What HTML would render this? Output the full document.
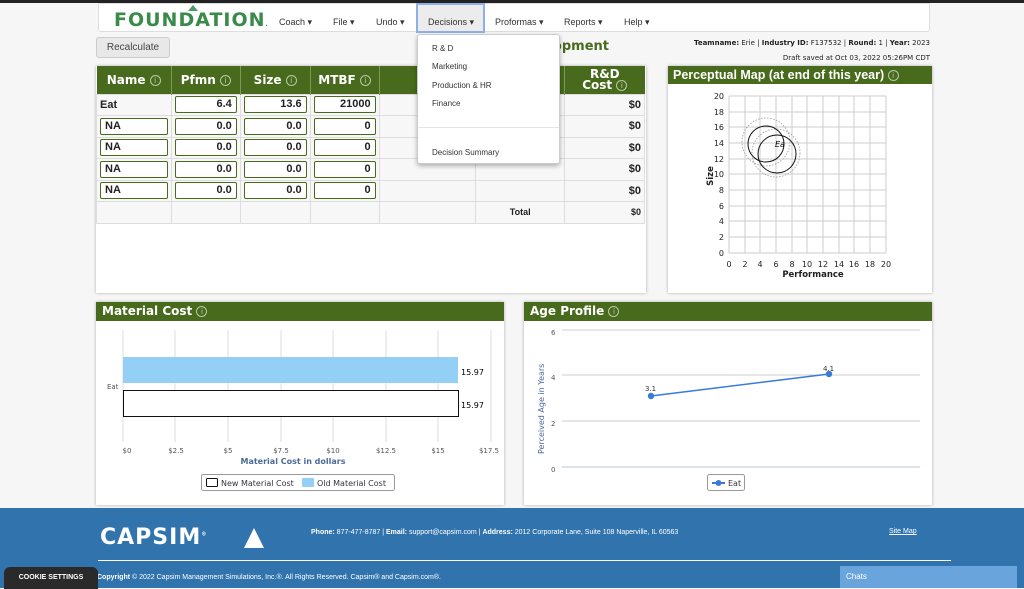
<!DOCTYPE html>
<html><head><meta charset="utf-8"><style>
*{box-sizing:border-box;margin:0;padding:0}
body{width:1024px;height:588px;overflow:hidden;background:#f6f6f6;font-family:"Liberation Sans",sans-serif;position:relative;color:#222}
.abs{position:absolute}
.panel{position:absolute;background:#fff;box-shadow:0 0 3px rgba(0,0,0,.3)}
.hdr{background:#486a1c;color:#fff;font-weight:bold;font-family:"DejaVu Sans","Liberation Sans",sans-serif}
.nav span{position:absolute;top:13px;font-size:9px;color:#333}
.i{display:inline-block;width:11px;height:11px;border:1px solid #b8c8a8;border-radius:50%;font-size:8px;line-height:9px;text-align:center;color:#b8c8a8;font-weight:normal;vertical-align:middle}
table{border-collapse:collapse}
td{border:1px solid #ddd;height:21.5px;font-size:11px;font-weight:bold;text-align:right;padding:0 3px;background:#f7f7f7}
th{border-left:1px solid #7d9a5a;color:#fff;font-size:12px;height:28px;font-family:"DejaVu Sans",sans-serif}
.in{border:1px solid #486a1c;border-radius:2px;background:#fff;height:17px;line-height:15px;padding:0 4px;font-size:11px}
.dd div{position:absolute;left:14px;font-size:8px;color:#333}
</style></head><body>
<div class="abs" style="left:0;top:0;width:1024px;height:3px;background:#222"></div>
<!-- nav -->
<div class="abs nav" style="left:98px;top:3px;width:832px;height:29px;background:#fff;border:1px solid #ddd;border-radius:0 0 3px 3px">
 <div class="abs" style="left:15px;top:5px;font-family:'DejaVu Sans',sans-serif;font-weight:bold;font-size:19px;color:#3a8a4a;letter-spacing:1px">FOUNDATION<span style="position:static;font-size:6px;color:#3a8a4a">.</span></div>
 <div class="abs" style="left:89px;top:1px;width:0;height:0;border-left:5px solid transparent;border-right:5px solid transparent;border-bottom:6px solid #4a9a6a"></div>
 <span style="left:180px">Coach ▾</span><span style="left:234px">File ▾</span><span style="left:277px">Undo ▾</span>
 <div class="abs" style="left:317px;top:-1px;width:69px;height:30px;background:#ececec;border:2px solid #8fb0e6"></div>
 <span style="left:329px">Decisions ▾</span><span style="left:396px">Proformas ▾</span><span style="left:465px">Reports ▾</span><span style="left:525px">Help ▾</span>
</div>
<div class="abs" style="left:96px;top:37px;width:74px;height:21px;background:#e8e8e8;border:1px solid #ccc;border-radius:3px;font-size:10px;color:#444;text-align:center;line-height:19px">Recalculate</div>
<div class="abs" style="right:415px;top:39px;font-size:13px;font-weight:bold;color:#486a1c;font-family:'DejaVu Sans',sans-serif">Research &amp; Development</div>
<div class="abs" style="right:94px;top:39px;font-size:7px;color:#222;font-family:'DejaVu Sans',sans-serif"><b>Teamname:</b> Erie | <b>Industry ID:</b> F137532 | <b>Round:</b> 1 | <b>Year:</b> 2023</div>
<div class="abs" style="right:94px;top:54px;font-size:7px;color:#222;font-family:'DejaVu Sans',sans-serif">Draft saved at Oct 03, 2022 05:26PM CDT</div>
<!-- table panel -->
<div class="panel" style="left:96px;top:66px;width:550px;height:227px">
<table style="width:549px">
<tr class="hdr"><th style="width:75px;border-left:0">Name <span class="i">i</span></th><th style="width:69px">Pfmn <span class="i">i</span></th><th style="width:70px">Size <span class="i">i</span></th><th style="width:69px">MTBF <span class="i">i</span></th><th style="width:97px;line-height:11px">R<br>D</th><th style="width:89px"></th><th style="width:80px;line-height:11px">R&amp;D<br>Cost <span class="i">i</span></th></tr>
<tr><td style="text-align:left">Eat</td><td><div class="in">6.4</div></td><td><div class="in">13.6</div></td><td><div class="in">21000</div></td><td></td><td></td><td>$0</td></tr>
<tr><td style="text-align:left"><div class="in">NA</div></td><td><div class="in">0.0</div></td><td><div class="in">0.0</div></td><td><div class="in">0</div></td><td></td><td></td><td>$0</td></tr>
<tr><td style="text-align:left"><div class="in">NA</div></td><td><div class="in">0.0</div></td><td><div class="in">0.0</div></td><td><div class="in">0</div></td><td></td><td></td><td>$0</td></tr>
<tr><td style="text-align:left"><div class="in">NA</div></td><td><div class="in">0.0</div></td><td><div class="in">0.0</div></td><td><div class="in">0</div></td><td></td><td></td><td>$0</td></tr>
<tr><td style="text-align:left"><div class="in">NA</div></td><td><div class="in">0.0</div></td><td><div class="in">0.0</div></td><td><div class="in">0</div></td><td></td><td></td><td>$0</td></tr>
<tr><td></td><td></td><td></td><td></td><td></td><td style="text-align:center;font-size:9px">Total</td><td style="font-size:9px">$0</td></tr>
</table>
</div>
<!-- dropdown -->
<div class="abs dd" style="left:417px;top:34px;width:143px;height:130px;background:#fff;border:1px solid #ccc;border-radius:3px;box-shadow:0 2px 5px rgba(0,0,0,.3)">
 <div style="top:9px">R &amp; D</div><div style="top:27px">Marketing</div><div style="top:46px">Production &amp; HR</div><div style="top:64px">Finance</div>
 <div style="left:0;top:92px;width:141px;height:1px;background:#e5e5e5"></div>
 <div style="top:113px">Decision Summary</div>
</div>
<!-- perceptual map -->
<div class="panel" style="left:668px;top:66px;width:264px;height:227px">
 <div class="hdr" style="height:18px;font-size:11px;padding:2px 5px;white-space:nowrap;font-family:'Liberation Sans',sans-serif;font-size:12.5px">Perceptual Map (at end of this year) <span class="i">i</span></div>
 <svg class="abs" style="left:0;top:0" width="264" height="227">
  <g stroke="#ccc" stroke-width="1">
   <path d="M61 30V187M77 30V187M92 30V187M108 30V187M124 30V187M139 30V187M155 30V187M171 30V187M186 30V187M202 30V187M218 30V187"/>
   <path d="M61 30H218M61 46H218M61 61H218M61 77H218M61 93H218M61 108H218M61 124H218M61 140H218M61 155H218M61 171H218M61 187H218"/>
  </g>
  <g fill="none" stroke="#999" stroke-dasharray="1.5,1.5" stroke-width=".8">
   <circle cx="98" cy="76" r="24"/><circle cx="108" cy="87" r="24"/>
  </g>
  <g fill="none" stroke="#111" stroke-width="1">
   <circle cx="98" cy="78" r="18"/><circle cx="109" cy="88" r="19"/>
  </g>
  <text x="107" y="81" font-size="8" font-family="DejaVu Sans" font-style="italic">Ea</text>
  <g font-size="8" font-family="DejaVu Sans" fill="#222" text-anchor="end">
   <text x="56" y="33">20</text><text x="56" y="49">18</text><text x="56" y="64">16</text><text x="56" y="80">14</text><text x="56" y="96">12</text><text x="56" y="111">10</text><text x="56" y="127">8</text><text x="56" y="143">6</text><text x="56" y="158">4</text><text x="56" y="174">2</text><text x="56" y="190">0</text>
  </g>
  <g font-size="8" font-family="DejaVu Sans" fill="#222" text-anchor="middle">
   <text x="61" y="201">0</text><text x="77" y="201">2</text><text x="92" y="201">4</text><text x="108" y="201">6</text><text x="124" y="201">8</text><text x="139" y="201">10</text><text x="155" y="201">12</text><text x="171" y="201">14</text><text x="186" y="201">16</text><text x="202" y="201">18</text><text x="218" y="201">20</text>
   <text x="145" y="211" font-weight="bold" font-size="8.5">Performance</text>
   <text transform="translate(45,110) rotate(-90)" font-weight="bold" font-size="8.5">Size</text>
  </g>
 </svg>
</div>
<!-- material cost -->
<div class="panel" style="left:96px;top:302px;width:408px;height:203px">
 <div class="hdr" style="height:19px;font-size:12px;padding:2px 6px">Material Cost <span class="i">i</span></div>
 <svg class="abs" style="left:0;top:0" width="408" height="203">
  <path d="M27 28V140M79 28V140M132 28V140M185 28V140M237 28V140M290 28V140M342 28V140M395 28V140" stroke="#ddd"/>
  <rect x="27" y="55" width="335" height="26" fill="#94d0f5"/>
  <rect x="27.5" y="88.5" width="335" height="26" fill="#fff" stroke="#111"/>
  <text x="365" y="73" font-size="8" font-family="DejaVu Sans">15.97</text>
  <text x="365" y="106" font-size="8" font-family="DejaVu Sans">15.97</text>
  <text x="11" y="87" font-size="7" fill="#555" font-family="DejaVu Sans">Eat</text>
  <g font-size="7" fill="#555" font-family="DejaVu Sans" text-anchor="middle">
   <text x="31" y="151">$0</text><text x="80" y="151">$2.5</text><text x="132" y="151">$5</text><text x="185" y="151">$7.5</text><text x="237" y="151">$10</text><text x="290" y="151">$12.5</text><text x="342" y="151">$15</text><text x="393" y="151">$17.5</text>
   <text x="197" y="162" font-weight="bold" font-size="8" fill="#4a6a9a">Material Cost in dollars</text>
  </g>
  <rect x="105.5" y="172.5" width="193" height="16" rx="2" fill="#fff" stroke="#999"/>
  <rect x="110.5" y="176.5" width="11" height="8" rx="1" fill="#fff" stroke="#111"/>
  <rect x="206" y="176" width="12" height="9" rx="1" fill="#94d0f5"/>
  <text x="125" y="184" font-size="8" fill="#334" font-family="DejaVu Sans">New Material Cost</text>
  <text x="221" y="184" font-size="8" fill="#334" font-family="DejaVu Sans">Old Material Cost</text>
 </svg>
</div>
<!-- age profile -->
<div class="panel" style="left:524px;top:302px;width:408px;height:203px">
 <div class="hdr" style="height:19px;font-size:12px;padding:2px 6px">Age Profile <span class="i">i</span></div>
 <svg class="abs" style="left:0;top:0" width="408" height="203">
  <path d="M38 28H396M38 73H396M38 119H396" stroke="#ccc"/>
  <path d="M38 165H396" stroke="#bcc6d6"/>
  <g font-size="7" fill="#555" font-family="DejaVu Sans"><text x="27" y="33">6</text><text x="27" y="78">4</text><text x="27" y="124">2</text><text x="27" y="170">0</text></g>
  <text transform="translate(20,152) rotate(-90)" font-size="8" fill="#4a6a9a" font-family="DejaVu Sans">Perceived Age in Years</text>
  <path d="M127 94L305 72" stroke="#3a7bd5" stroke-width="1.5"/>
  <circle cx="127" cy="94" r="3.2" fill="#3a7bd5"/><circle cx="305" cy="72" r="3.2" fill="#3a7bd5"/>
  <text x="121" y="89" font-size="7" fill="#333" font-family="DejaVu Sans">3.1</text>
  <text x="299" y="69" font-size="7" fill="#333" font-family="DejaVu Sans">4.1</text>
  <rect x="183.5" y="172.5" width="37" height="16" rx="2" fill="#fff" stroke="#999"/>
  <path d="M188 181H201" stroke="#3a7bd5" stroke-width="2"/><circle cx="194.5" cy="181" r="3" fill="#3a7bd5"/>
  <text x="204" y="184" font-size="8" fill="#334" font-family="DejaVu Sans">Eat</text>
 </svg>
</div>
<!-- footer -->
<div class="abs" style="left:0;top:508px;width:1024px;height:80px;background:#3174ad;color:#fff">
 <div class="abs" style="left:100px;top:17px;font-family:'DejaVu Sans',sans-serif;font-weight:bold;font-size:22px;letter-spacing:1px">CAPSIM<sup style="font-size:5px">®</sup></div>
 <div class="abs" style="left:244px;top:20px;width:0;height:0;border-left:10px solid transparent;border-right:10px solid transparent;border-bottom:20px solid #fff"></div>
 <div class="abs" style="left:311px;top:21px;font-size:7px"><b>Phone:</b> 877-477-8787 | <b>Email:</b> support@capsim.com | <b>Address:</b> 2012 Corporate Lane, Suite 108 Naperville, IL 60563</div>
 <div class="abs" style="left:889px;top:20px;font-size:7px;text-decoration:underline">Site Map</div>
 <div class="abs" style="left:98px;top:52px;width:853px;height:1px;background:#fff"></div>
 <div class="abs" style="left:97px;top:66px;font-size:7px"><b>Copyright</b> © 2022 Capsim Management Simulations, Inc.®. All Rights Reserved. Capsim® and Capsim.com®.</div>
 <div class="abs" style="left:4px;top:59px;width:94px;height:22px;background:#2a2a2a;border-radius:6px 6px 0 0;font-size:7px;font-weight:bold;line-height:22px;text-align:center">COOKIE SETTINGS</div>
 <div class="abs" style="left:840px;top:58px;width:177px;height:22px;background:#6aa4dc;font-size:8px;line-height:22px;padding-left:6px">Chats</div>
</div>
</body></html>
